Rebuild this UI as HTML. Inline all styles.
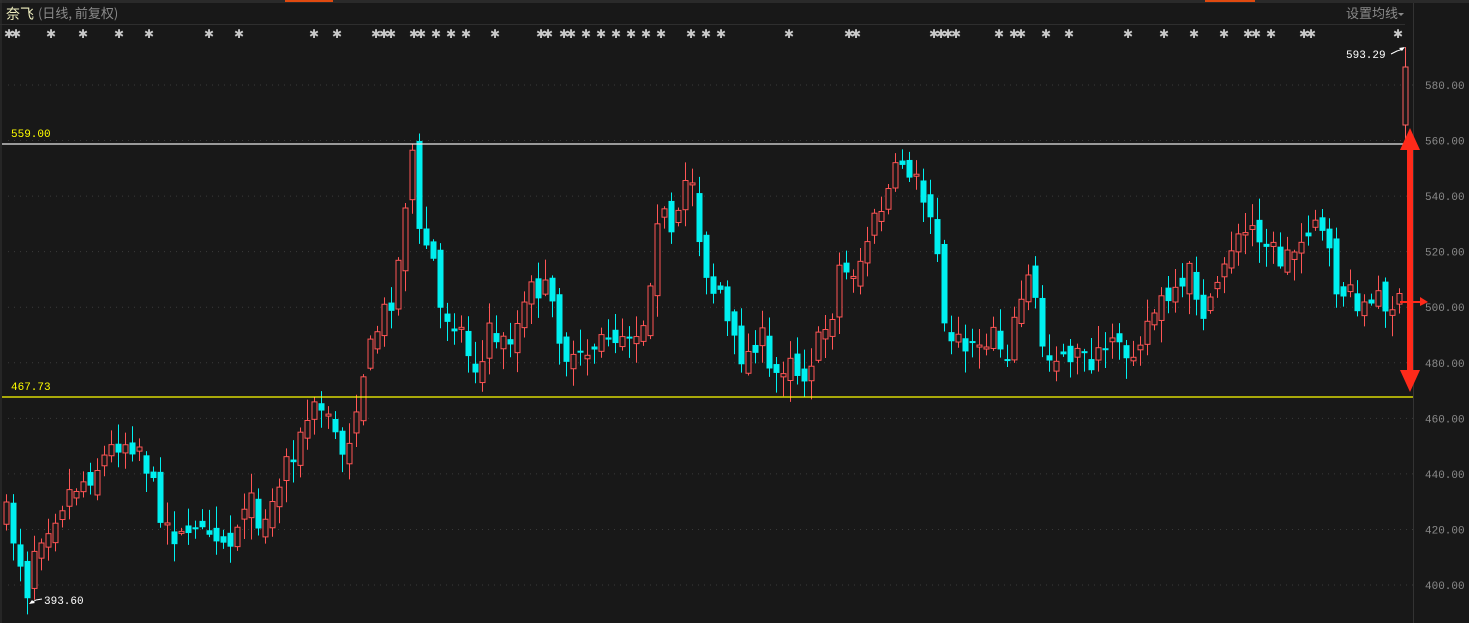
<!DOCTYPE html>
<html><head><meta charset="utf-8"><style>
html,body{margin:0;padding:0;background:#181818;width:1469px;height:623px;overflow:hidden;font-family:"Liberation Mono","Noto Sans CJK SC",monospace}
</style></head><body>
<svg id="s" width="1469" height="623" xmlns="http://www.w3.org/2000/svg" style="position:absolute;left:0;top:0">
<rect width="1469" height="623" fill="#181818"/>
<rect x="0" y="0" width="1469" height="3" fill="#2a2a2a"/>
<rect x="285" y="0" width="48" height="2" fill="#e04a10"/>
<rect x="1205" y="0" width="50" height="2" fill="#e04a10"/>
<line x1="1" y1="0" x2="1" y2="623" stroke="#333"/>
<line x1="0" y1="24.5" x2="1405" y2="24.5" stroke="#2e2e2e"/>
<line x1="1413.5" y1="3" x2="1413.5" y2="623" stroke="#333"/>
<text x="6" y="19" font-size="14" fill="#f0f0c0" font-family="Noto Sans CJK SC,sans-serif">奈飞</text>
<text x="38" y="18" font-size="13" fill="#8a8a8a" font-family="Noto Sans CJK SC,sans-serif">(日线, 前复权)</text>
<text x="1346" y="18" font-size="13" fill="#8a8a8a" font-family="Noto Sans CJK SC,sans-serif">设置均线</text>
<path d="M1398 13 L1404 13 L1401 16Z" fill="#8a8a8a"/>
<g id="grid"></g>
<g id="stars" fill="#c8c8c8" font-size="12" font-family="DejaVu Sans,sans-serif"></g>
<g id="c"></g>
<line x1="2" y1="144" x2="1413" y2="144" stroke="#e8e8e8" stroke-width="1.3"/>
<line x1="2" y1="397" x2="1413" y2="397" stroke="#ffff00" stroke-width="1.3"/>
<text x="11" y="137" font-size="11" fill="#ffff00">559.00</text>
<text x="11" y="390" font-size="11" fill="#ffff00">467.73</text>
<text x="1346" y="58" font-size="11" fill="#ffffff">593.29</text>
<path d="M1391 54 L1397 51 L1403 49" stroke="#fff" fill="none"/><path d="M1399 48 L1405 47 L1402 51Z" fill="#fff"/>
<text x="44" y="604" font-size="11" fill="#ffffff">393.60</text>
<path d="M42 599 L36 600 L31 603" stroke="#fff" fill="none"/><path d="M29 604 L35 603 L32 600Z" fill="#fff"/>
<g fill="#ff2a1a">
<rect x="1407" y="148" width="6" height="225"/>
<path d="M1400 150 L1410 128 L1420 150Z"/>
<path d="M1400 370 L1410 392 L1420 370Z"/>
<path d="M1400 301 L1420 301 L1420 297 L1428 302 L1420 306 L1420 303 L1400 303Z"/>
</g>
</svg>
<script>
(function(){
var ns="http://www.w3.org/2000/svg";
function el(g,t,a,txt){var e=document.createElementNS(ns,t);for(var k in a)e.setAttribute(k,a[k]);if(txt)e.textContent=txt;document.getElementById(g).appendChild(e);}
for(var p=400;p<=580;p+=20){var y=85+(580-p)*2.778;el('grid','line',{x1:8,y1:y,x2:1413,y2:y,stroke:'#3a3a3a','stroke-dasharray':'1,5'});el('grid','text',{x:1425,y:y+4,'font-size':11,fill:'#8a8a8a'},p.toFixed(2));}
var sx=[8,15,50,82,118,148,208,238,313,336,375,383,390,413,420,435,450,465,494,540,547,563,570,585,600,615,630,645,660,690,705,720,788,848,855,933,940,947,955,998,1013,1020,1045,1068,1127,1163,1193,1223,1247,1255,1270,1303,1310,1397];
sx.forEach(function(x){el('stars','text',{x:x-4,y:38},'✱');});
var kp=[[6,515],[20,560],[27,590],[35,540],[50,520],[70,490],[90,475],[110,450],[120,440],[140,445],[150,480],[165,525],[180,540],[200,515],[215,530],[230,545],[245,495],[260,520],[275,500],[285,460],[300,440],[310,410],[325,410],[335,440],[345,455],[360,380],[370,350],[380,320],[395,290],[405,200],[412,150],[420,250],[430,240],[440,310],[455,320],[470,355],[480,370],[490,330],[505,345],[520,320],[530,290],[545,290],[555,320],[570,370],[590,350],[610,335],[630,325],[645,335],[652,250],[662,210],[675,240],[683,180],[690,170],[698,230],[710,290],[720,290],[730,340],[745,360],[760,330],[770,380],[780,370],[790,350],[800,380],[810,360],[820,340],[832,310],[840,260],[850,280],[860,260],[870,230],[885,200],[893,180],[900,160],[907,165],[915,180],[925,200],[935,225],[945,320],[955,340],[970,345],[985,340],[995,320],[1005,360],[1020,300],[1030,275],[1045,360],[1060,350],[1075,355],[1090,360],[1110,350],[1125,355],[1140,335],[1155,310],[1165,300],[1180,300],[1190,270],[1200,310],[1210,310],[1220,270],[1230,245],[1245,235],[1255,225],[1265,240],[1280,260],[1295,250],[1305,230],[1315,215],[1325,245],[1335,285],[1345,295],[1360,300],[1370,310],[1380,295],[1390,305],[1399,305]];
function f(x){for(var i=1;i<kp.length;i++){if(x<=kp[i][0]){var a=kp[i-1],b=kp[i];return a[1]+(b[1]-a[1])*(x-a[0])/(b[0]-a[0]);}}return kp[kp.length-1][1];}
var seed=7;function r(){seed=(seed*16807)%2147483647;return seed/2147483647;}
var prev=f(6);
for(var x=6;x<=1399;x+=7){
 var c=f(x)+(r()-0.5)*26;var o=prev+(r()-0.5)*22;
 if(Math.abs(c-o)<2)c=o+(r()<.5?-2:2);
 var bt=Math.min(o,c),bb=Math.max(o,c);
 var hi=bt-r()*20-2,lo=bb+r()*20+2;
 var up=c<o,col=up?'#ff5555':'#00f0f0';
 el('c','line',{x1:x+0.5,y1:hi,x2:x+0.5,y2:lo,stroke:col});
 if(up)el('c','rect',{x:x-2,y:bt,width:5,height:bb-bt,fill:'#181818',stroke:col});
 else el('c','rect',{x:x-2.5,y:bt,width:6,height:bb-bt,fill:col});
 prev=c;
}
el('c','line',{x1:1405.5,y1:47,x2:1405.5,y2:140,stroke:'#ff6060'});
el('c','rect',{x:1403,y:67,width:5,height:58,fill:'#181818',stroke:'#ff6060'});
})();
</script>
</body></html>
